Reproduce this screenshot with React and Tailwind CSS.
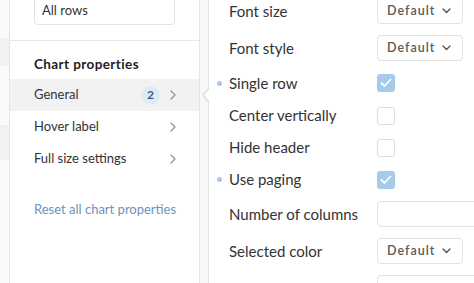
const Chevron = () => (
  <svg width="8" height="12" viewBox="0 0 8 12" fill="none">
    <path d="M2 2l4 4-4 4" stroke="#9a9a9a" strokeWidth="1.4" strokeLinecap="round" strokeLinejoin="round" />
  </svg>
);

const Caret = () => (
  <svg width="9" height="6" viewBox="0 0 9 6" fill="none">
    <path d="M1 1l3.5 3.5L8 1" stroke="#555" strokeWidth="1.4" strokeLinecap="round" strokeLinejoin="round" />
  </svg>
);

const Select = () => (
  <div className="w-[86px] h-[26px] border border-[#e2e2e2] rounded-[4px] flex items-center justify-between pl-[9px] pr-[11px] bg-white">
    <span className="text-[12.5px] font-semibold tracking-[0.08em] text-[#5a5a5a]">Default</span>
    <Caret />
  </div>
);

const Checkbox = ({ checked }) =>
  checked ? (
    <div className="w-[18px] h-[18px] rounded-[3px] bg-[#a6caec] flex items-center justify-center">
      <svg width="12" height="10" viewBox="0 0 12 10" fill="none">
        <path d="M1.5 5l3 3 6-6.5" stroke="#fff" strokeWidth="1.8" strokeLinecap="round" strokeLinejoin="round" />
      </svg>
    </div>
  ) : (
    <div className="w-[18px] h-[18px] rounded-[3px] border border-[#dcdcdc] bg-white" />
  );

const Row = ({ label, dot, h, children }) => (
  <div className={`flex items-center ${h}`}>
    <div className="w-[20px] flex justify-center">
      {dot && <span className="w-[5px] h-[5px] rounded-full bg-[#a9c7e6]" />}
    </div>
    <div className="w-[148px] text-[15px] text-[#333]">{label}</div>
    {children}
  </div>
);

const NavItem = ({ label, badge, active }) => (
  <div className={`h-[32px] flex items-center pl-[24px] pr-[22px] ${active ? "bg-[#f2f2f2]" : ""}`}>
    <span className="flex-1 text-[13px] text-[#333]">{label}</span>
    {badge && (
      <span className="w-[19px] h-[19px] rounded-full bg-[#dfecf8] text-[#3d5b80] text-[12px] font-bold flex items-center justify-center mr-[9px]">
        {badge}
      </span>
    )}
    <Chevron />
  </div>
);

export default function App() {
  return (
    <div className="w-[474px] h-[283px] overflow-hidden flex bg-white font-['Lato',sans-serif]">
      <div className="w-[10px] shrink-0 bg-[#fafafa] border-r border-[#e6e6e6] flex flex-col">
        <div className="h-[38px]" />
        <div className="h-[28px] bg-[#f1f1f1]" />
        <div className="h-[59px]" />
        <div className="h-[35px] bg-[#f1f1f1]" />
      </div>

      <div className="w-[190px] shrink-0 bg-white border-r border-[#e6e6e6] flex flex-col">
        <div className="ml-[24px] w-[141px] h-[29px] -mt-[4px] border border-[#e2e2e2] rounded-[4px] flex items-center pl-[7px] text-[13px] text-[#333]">
          All rows
        </div>
        <div className="mt-[15px] border-t border-[#e8e8e8]" />
        <div className="h-[38px] flex items-end pl-[24px] pb-[5px] text-[13.5px] font-bold text-[#222] tracking-[0.03em]">
          Chart properties
        </div>
        <NavItem label="General" badge="2" active />
        <NavItem label="Hover label" />
        <NavItem label="Full size settings" />
        <div className="pl-[24px] mt-[25px] text-[13px] text-[#6c93bd]">Reset all chart properties</div>
      </div>

      <div className="relative w-[9px] shrink-0 bg-[#f7f7f7] border-r border-[#e4e4e4]">
        <svg className="absolute left-[1px] top-[87px]" width="9" height="16" viewBox="0 0 9 16" fill="none">
          <path d="M8 1L2 8l6 7" stroke="#dcdcdc" strokeWidth="1.2" fill="#fff" />
        </svg>
      </div>

      <div className="flex-1 bg-white flex flex-col gap-[11px] -mt-[2px]">
        <Row label="Font size" h="h-[26px]"><Select /></Row>
        <Row label="Font style" h="h-[26px]"><Select /></Row>
        <Row label="Single row" dot h="h-[22px]"><Checkbox checked /></Row>
        <Row label="Center vertically" h="h-[21px]"><Checkbox /></Row>
        <Row label="Hide header" h="h-[21px]"><Checkbox /></Row>
        <Row label="Use paging" dot h="h-[21px]"><Checkbox checked /></Row>
        <Row label="Number of columns" h="h-[26px]">
          <div className="w-[120px] h-[26px] shrink-0 border border-[#e2e2e2] rounded-[4px] bg-white" />
        </Row>
        <Row label="Selected color" h="h-[26px]"><Select /></Row>
        <Row label="Header" h="h-[26px]">
          <div className="w-[120px] h-[26px] shrink-0 border border-[#e2e2e2] rounded-[4px] bg-white" />
        </Row>
      </div>
    </div>
  );
}
